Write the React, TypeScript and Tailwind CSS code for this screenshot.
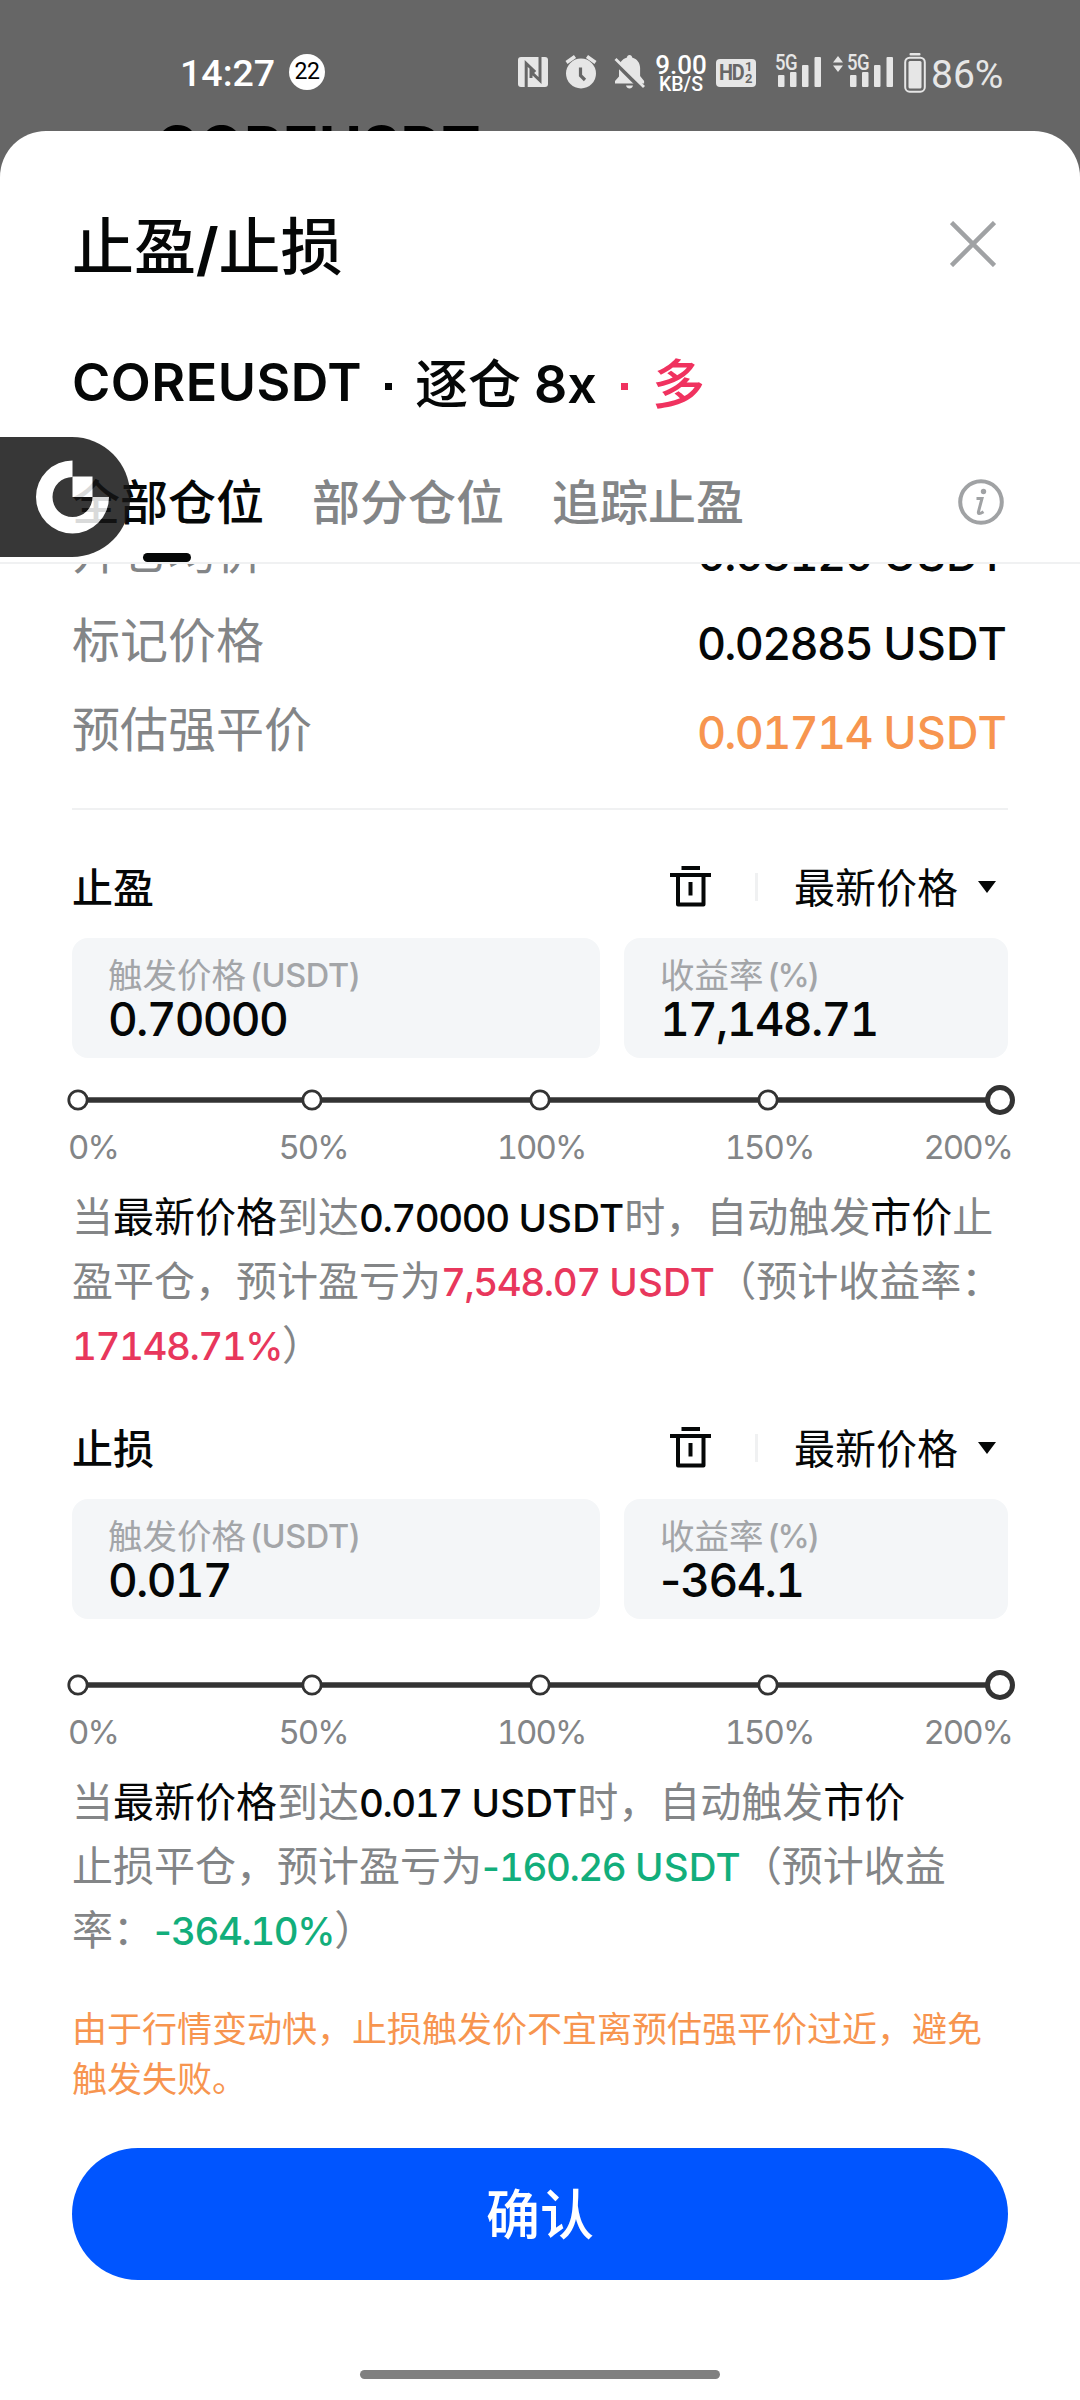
import React from 'react';
import clsx from 'clsx';

const TICKS = ['0%', '50%', '100%', '150%', '200%'];

const NfcIcon = () => (
    <svg className="w-[30px] h-[30px]" viewBox="0 0 30 30" fill="none">
        <rect width="30" height="30" rx="3" fill="#e6e6e6" />
        <path
            d="M8.2 30V6.5l9 8.5M22 0v23.5L13 15v6"
            stroke="#666"
            strokeWidth="3"
        />
    </svg>
);

const AlarmIcon = () => (
    <svg className="w-8 h-[34px]" viewBox="0 0 32 34" fill="none">
        <circle cx="16" cy="18.500" r="15" fill="#e6e6e6" />
        <path
            d="M1.500 7.500 10 1.600M30.500 7.500 22 1.600"
            stroke="#e6e6e6"
            strokeWidth="3.600"
        />
        <path d="M15.500 12.500v8l4.500 4.500" stroke="#666" strokeWidth="3.200" />
    </svg>
);

const BellOffIcon = () => (
    <svg className="w-[31px] h-[34px]" viewBox="0 0 31 34" fill="none">
        <path
            d="M15.500 0c1.600 0 2.600 1 2.600 2.500 5 1.400 8 5.500 8 10.500v8l4 5v2.500H1V26l4-4.500V13C5 8 8 4 13 2.500 13 1 14 0 15.500 0Z"
            fill="#e6e6e6"
        />
        <path d="M12 30.500h7c-.5 2-1.800 3-3.500 3s-3-1-3.500-3Z" fill="#e6e6e6" />
        <path d="M-1 5.500 28 34.500" stroke="#666" strokeWidth="4" />
        <path d="M1.500 4 30 32" stroke="#e6e6e6" strokeWidth="2.800" />
    </svg>
);

const SignalIcon = ({ className = '' }) => (
    <div className={clsx('relative w-[46px] h-[32px]', className)}>
        <span className="absolute left-0 -top-[2px] font-[Roboto] font-medium text-[22px] leading-[20px] tracking-[-0.5px] origin-left scale-x-[.84] text-[#e6e6e6]">
            5G
        </span>
        <svg className="w-[46px] h-8" viewBox="0 0 46 32" fill="#e6e6e6">
            <rect x="3" y="20" width="6.500" height="12" rx="1" />
            <rect x="15" y="17" width="6.500" height="15" rx="1" />
            <rect x="27" y="10" width="6.500" height="22" rx="1" />
            <rect x="39.500" y="2" width="6.500" height="30" rx="1" />
        </svg>
    </div>
);

const BatteryIcon = () => (
    <svg className="w-[22px] h-[40px]" viewBox="0 0 22 40" fill="none">
        <rect x="5.500" y="0" width="11" height="2.500" rx="1" fill="#e6e6e6" />
        <rect
            x="1.200"
            y="4.700"
            width="19.600"
            height="34"
            rx="4.500"
            stroke="#e6e6e6"
            strokeWidth="2"
        />
        <rect x="4.500" y="8" width="13" height="27.500" rx="1.500" fill="#e6e6e6" />
    </svg>
);

const TrashIcon = () => (
    <svg className="w-[41px] h-[41px] mb-[2px]" viewBox="0 0 41 41" fill="none">
        <path
            d="M11.500 2H30M0 9h41M8 9v29.500h25.500V9"
            stroke="#050707"
            strokeWidth="4"
            strokeLinejoin="round"
        />
        <path d="M20.500 16v13.500" stroke="#050707" strokeWidth="4" />
    </svg>
);

const StatusBar = () => (
    <div className="h-24 flex items-start font-[Roboto] text-white pt-[53px]">
        <span className="ml-[180px] w-[109px] h-10 text-[37.5px] leading-[40px] font-medium">
            14:27
        </span>
        <span className="w-9 h-9 mt-px rounded-full bg-white text-black text-[23px] leading-[36px] text-center tracking-[-0.5px]">
            22
        </span>
        <div className="ml-[193px] mt-1">
            <NfcIcon />
        </div>
        <div className="ml-[17px] mt-0.5">
            <AlarmIcon />
        </div>
        <div className="ml-[17px] mt-0.5">
            <BellOffIcon />
        </div>
        <div className="ml-[9px] w-[54px] flex flex-col items-center font-medium">
            <span className="text-[26px] leading-[23px] mt-px">9.00</span>
            <span className="text-[19.5px] leading-[15px]">KB/S</span>
        </div>
        <div className="ml-[8px] mt-[6px] w-[40px] h-7 rounded-[4px] bg-[#e6e6e6] text-[#666] flex items-center pl-[3px] font-bold">
            <span className="text-[22px] leading-7 w-[26px] tracking-[-1.5px] origin-left scale-x-[.9]">
                HD
            </span>
            <span className="flex flex-col text-[13px] leading-[12px]">
                <span>1</span>
                <span>2</span>
            </span>
        </div>
        <SignalIcon className="ml-[19px] mt-0.5" />
        <svg
            className="ml-[12px] mt-[3px] w-[10px] h-4"
            viewBox="0 0 10 16"
            fill="#e6e6e6"
        >
            <path d="M5 0l5 6.500H0ZM5 16l5-6.500H0Z" />
        </svg>
        <SignalIcon className="ml-[4px] mt-0.5" />
        <div className="ml-[11px]">
            <BatteryIcon />
        </div>
        <span className="ml-[5px] mt-px text-[39px] leading-[42px] text-[#e6e6e6]">
            86%
        </span>
    </div>
);

const FloatingBadge = () => (
    <div className="absolute left-0 top-[437px] w-[130px] h-[120px] rounded-r-[58px] bg-[#151515] opacity-85">
        <svg className="w-[130px] h-[120px]" viewBox="0 0 130 120" fill="#fff">
            <path d="M72.500 23.500A36.500 36.500 0 1 0 109 60H92.500A20 20 0 1 1 72.500 40Z" />
            <rect x="72.500" y="39.500" width="20" height="20.500" />
        </svg>
    </div>
);

// tabular digits, while the sign and the unit keep their own narrower widths
const Amount = ({ value, unit = '' }) => {
    const negative = value.startsWith('-');

    return (
        <>
            {negative && <span className="tracking-[-0.02em]">-</span>}
            <span className="tabular-nums tracking-[-0.038em]">
                {negative ? value.slice(1) : value}
            </span>
            {unit && (
                <span className="ml-[0.25em] tracking-[0.005em]">{unit}</span>
            )}
        </>
    );
};

const PriceRow = ({ label, value, accent = false }) => (
    <div className="h-[89px] flex items-center justify-between">
        <span className="text-[48px] text-[#838587]">{label}</span>
        <span
            className={clsx(
                'pt-[6px] mr-px text-[45px] font-medium',
                accent ? 'text-[#f7954f]' : 'text-[#050707]',
            )}
        >
            <Amount value={value} unit="USDT" />
        </span>
    </div>
);

const Field = ({ label, unit, value, className }) => (
    <div
        className={clsx(
            'h-[120px] rounded-[16px] bg-[#f4f6f8] pl-9 pt-[17px] flex flex-col',
            className,
        )}
    >
        <span className="h-[42px] flex items-center text-[34.5px] text-[#a3a5a8] whitespace-nowrap">
            {label}
            <span
                className={clsx(
                    'ml-1 text-[32.5px] font-medium',
                    unit === '(%)' ? 'tracking-[-2px]' : 'tracking-[-0.4px]',
                )}
            >
                {unit}
            </span>
        </span>
        <span className="h-[44px] flex items-center text-[46px] leading-[44px] font-medium text-[#050707]">
            <Amount value={value} />
        </span>
    </div>
);

const Slider = () => (
    <div className="h-[74px]">
        <svg
            className="-ml-3 w-[960px] h-[30px]"
            viewBox="60 0 960 30"
            fill="#fff"
            stroke="#333"
        >
            <path d="M78 15H1000" strokeWidth="5.500" />
            <circle cx="78" cy="15" r="9.200" strokeWidth="2.800" />
            <circle cx="312" cy="15" r="9.200" strokeWidth="2.800" />
            <circle cx="540" cy="15" r="9.200" strokeWidth="2.800" />
            <circle cx="768" cy="15" r="9.200" strokeWidth="2.800" />
            <circle cx="1000" cy="15" r="12.500" strokeWidth="5" />
        </svg>
        <div className="-mx-[4px] mt-[11px] flex text-[33px] leading-[42px] tabular-nums tracking-[-2px] text-[#838587]">
            {TICKS.map((tick, i) => (
                <span
                    key={tick}
                    className={clsx(
                        i === 0 && 'w-[131px] text-left',
                        i > 0 && i < 4 && 'w-[228px] text-center',
                        i === 4 && 'flex-1 text-right',
                    )}
                >
                    {tick}
                </span>
            ))}
        </div>
    </div>
);

const Num = ({ value, unit = '', className }) => (
    <span
        className={clsx('text-[38.5px] leading-none font-[450]', className)}
    >
        <Amount value={value} unit={unit} />
    </span>
);

const Strong = ({ children }) => (
    <span className="text-[#050707]">{children}</span>
);

const OrderSection = ({ title, price, rate, gap, children }) => (
    <section>
        <div className="h-[50px] flex items-center text-[41px] text-[#050707]">
            <span className="flex-1 pt-[3px] font-[450]">{title}</span>
            <TrashIcon />
            <span className="ml-[44px] w-[3px] h-7 bg-[#f0f1f2]" />
            <span className="ml-[36px] pt-[3px]">最新价格</span>
            <svg
                className="ml-[20px] mr-[12px] w-[18px] h-[12px]"
                viewBox="0 0 18 12"
                fill="#050707"
            >
                <path d="M0 0H18L9 12Z" />
            </svg>
        </div>
        <div className="mt-[26px] flex gap-6">
            <Field
                className="w-[528px]"
                label="触发价格"
                unit="(USDT)"
                value={price}
            />
            <Field
                className="flex-1"
                label="收益率"
                unit="(%)"
                value={rate}
            />
        </div>
        <div className={gap}>
            <Slider />
        </div>
        <div className="mt-[26px] pb-px grid auto-rows-[64px] text-[41px] leading-[64px] text-[#838587] whitespace-nowrap">
            {children}
        </div>
    </section>
);

const App = () => {
    return (
        <div className="relative w-[1080px] h-[2400px] overflow-hidden bg-[#666] font-[Inter,'Noto_Sans_CJK_SC',sans-serif]">
            <div className="h-[131px] overflow-hidden">
                <StatusBar />
                <div className="ml-[155px] mt-[17px] text-[59px] leading-[70px] font-bold text-black">
                    COREUSDT
                </div>
            </div>

            <div className="h-[2269px] rounded-t-[46px] bg-white flex flex-col">
                <div className="h-[433px] border-b-2 border-[#f0f1f2] px-[72px]">
                    <div className="pt-[81px] flex justify-between">
                        <h1 className="h-[71px] leading-[72px] text-[62px] font-medium text-[#050707]">
                            止盈<span className="font-bold text-[58px]">/</span>
                            止损
                        </h1>
                        <svg
                            className="mt-[9px] mr-3 w-[46px] h-[46px]"
                            viewBox="0 0 46 46"
                            fill="none"
                        >
                            <path
                                d="M1.500 1.500l43 43M44.500 1.500l-43 43"
                                stroke="#a0a2a4"
                                strokeWidth="4.500"
                            />
                        </svg>
                    </div>
                    <div className="mt-[64px] h-[70px] flex items-center text-[53px] font-medium text-[#050707] whitespace-pre">
                        <span className="pt-px text-[52px] font-semibold tracking-[0.5px]">
                            COREUSDT
                        </span>
                        <span className="w-[7px] h-[7px] ml-[23px] mr-[23px] mt-2 bg-[#050707]" />
                        <span className="pt-[7px]">逐仓</span>
                        <span className="pt-[5px] ml-[13px] text-[52px] font-semibold">
                            8x
                        </span>
                        <span className="w-[7px] h-[7px] ml-[24px] mr-[24px] mt-2 bg-[#f0325f]" />
                        <span className="pt-[7px] text-[#f0325f]">多</span>
                    </div>
                    <div className="mt-[40px] h-[105px] flex items-start text-[48px] leading-[92px] text-[#838587]">
                        <span className="font-medium text-[#050707]">
                            全部仓位
                        </span>
                        <span className="ml-12 font-medium">部分仓位</span>
                        <span className="ml-12 font-medium">追踪止盈</span>
                        <svg
                            className="ml-auto mt-[22px] mr-1 w-[46px] h-[46px]"
                            viewBox="0 0 46 46"
                            fill="none"
                        >
                            <circle
                                cx="23"
                                cy="23"
                                r="20.800"
                                stroke="#a0a2a4"
                                strokeWidth="4"
                            />
                            <circle cx="25.500" cy="12.500" r="2.700" fill="#a0a2a4" />
                            <path
                                d="M18.500 19.500h5.500l-3.500 13c-.6 2.500.8 2.800 5 .2"
                                stroke="#a0a2a4"
                                strokeWidth="3"
                            />
                        </svg>
                    </div>
                </div>

                <div className="px-[72px] overflow-hidden">
                    <div className="-mt-[57px] pb-[34px] border-b-2 border-[#f0f1f2]">
                        <PriceRow label="开仓均价" value="0.03120" />
                        <PriceRow label="标记价格" value="0.02885" />
                        <PriceRow label="预估强平价" value="0.01714" accent />
                    </div>

                    <div className="mt-[52px]">
                        <OrderSection
                            title="止盈"
                            price="0.70000"
                            rate="17,148.71"
                            gap="mt-[27px]"
                        >
                            <p>
                                当<Strong>最新价格</Strong>到达
                                <Num
                                    className="text-[#050707]"
                                    value="0.70000"
                                    unit="USDT"
                                />
                                时，自动触发<Strong>市价</Strong>止
                            </p>
                            <p>
                                盈平仓，预计盈亏为
                                <Num
                                    className="text-[#e8375c]"
                                    value="7,548.07"
                                    unit="USDT"
                                />
                                （预计收益率：
                            </p>
                            <p>
                                <Num
                                    className="text-[#e8375c]"
                                    value="17148.71%"
                                />
                                ）
                            </p>
                        </OrderSection>
                    </div>

                    <div className="mt-[45px]">
                        <OrderSection
                            title="止损"
                            price="0.017"
                            rate="-364.1"
                            gap="mt-[51px]"
                        >
                            <p>
                                当<Strong>最新价格</Strong>到达
                                <Num
                                    className="text-[#050707]"
                                    value="0.017"
                                    unit="USDT"
                                />
                                时，自动触发<Strong>市价</Strong>
                            </p>
                            <p>
                                止损平仓，预计盈亏为
                                <Num
                                    className="text-[#12ae7b]"
                                    value="-160.26"
                                    unit="USDT"
                                />
                                （预计收益
                            </p>
                            <p>
                                率：
                                <Num
                                    className="text-[#12ae7b]"
                                    value="-364.10%"
                                />
                                ）
                            </p>
                        </OrderSection>
                    </div>

                    <p className="mt-[41px] h-[100px] text-[35px] leading-[50px] text-[#f7954f] whitespace-nowrap">
                        由于行情变动快，止损触发价不宜离预估强平价过近，避免
                        <br />
                        触发失败。
                    </p>

                    <button className="mt-[44px] w-full h-[132px] pt-[3px] rounded-full bg-[#0055ff] text-white text-[54px] font-medium flex items-center justify-center">
                        确认
                    </button>
                </div>
            </div>

            {/* active tab marker sits on the header border */}
            <div className="absolute left-[143px] top-[553px] w-12 h-[9px] rounded-full bg-[#050707]" />
            <FloatingBadge />
            <div className="absolute left-[360px] top-[2370px] w-[360px] h-[9px] rounded-full bg-[#808080]" />
        </div>
    );
};

export default App;
